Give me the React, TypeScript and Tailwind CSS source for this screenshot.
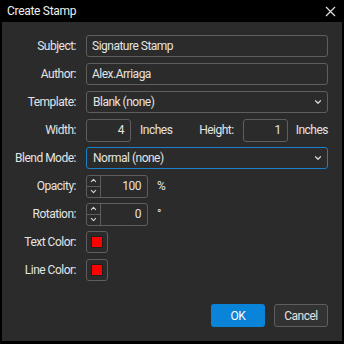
import React from "react";

const Chevron = ({ dir = "down", size = 8 }: { dir?: "up" | "down"; size?: number }) => (
  <svg width={size} height={size} viewBox="0 0 8 8" fill="none">
    <path
      d={dir === "down" ? "M1.5 2.75 L4 5.25 L6.5 2.75" : "M1.5 5.25 L4 2.75 L6.5 5.25"}
      stroke="#d8d8d8"
      strokeWidth="1.2"
      strokeLinecap="round"
      strokeLinejoin="round"
    />
  </svg>
);

const Label = ({ children }: { children: React.ReactNode }) => (
  <div className="w-[74px] shrink-0 text-right">{children}</div>
);

const TextInput = ({ value }: { value: string }) => (
  <div className="flex-1 h-[22px] border border-[#5e5e5e] rounded-[3px] flex items-center px-[5px]">{value}</div>
);

const Select = ({ value, active = false }: { value: string; active?: boolean }) => (
  <div
    className={`flex-1 h-[22px] border rounded-[3px] flex items-center justify-between pl-[6px] pr-[5px] ${
      active ? "border-[#1a80c8]" : "border-[#5e5e5e]"
    }`}
  >
    <span>{value}</span>
    <Chevron />
  </div>
);

const Spin = ({ value, unit }: { value: string; unit: string }) => (
  <div className="flex items-center">
    <div className="w-[62px] h-[23px] shrink-0 border border-[#5e5e5e] rounded-[3px] flex">
      <div className="w-[14px] border-r border-[#5e5e5e] flex flex-col">
        <div className="flex-1 flex items-center justify-center border-b border-[#5e5e5e]">
          <Chevron dir="up" size={7} />
        </div>
        <div className="flex-1 flex items-center justify-center">
          <Chevron dir="down" size={7} />
        </div>
      </div>
      <div className="flex-1 flex items-center justify-end pr-[6px]">{value}</div>
    </div>
    <span className="ml-[9px]">{unit}</span>
  </div>
);

const Swatch = () => (
  <div className="w-[22px] h-[22px] shrink-0 border border-[#5e5e5e] rounded-[3px] flex items-center justify-center">
    <div className="w-[12px] h-[12px] bg-[#ff0000] border border-[#202020]" />
  </div>
);

export default function App() {
  return (
    <div
      className="w-[344px] h-[344px] bg-black flex flex-col text-[#e4e4e4] text-[12px] tracking-[-0.5px]"
      style={{ fontFamily: "Roboto, 'Liberation Sans', sans-serif" }}
    >
      <div className="h-[22px] shrink-0 flex items-center justify-between pl-[7px] pr-[8px]">
        <span className="text-[12px] tracking-[-0.3px] text-[#f0f0f0]">Create Stamp</span>
        <svg width="11" height="11" viewBox="0 0 11 11">
          <path d="M1 1 L10 10 M10 1 L1 10" stroke="#e0e0e0" strokeWidth="1.2" />
        </svg>
      </div>
      <div className="flex-1 mx-[2px] mb-[3px] bg-[#2b2b2b] flex flex-col pt-[13px] pr-[14px] pb-[14px]">
        <div className="flex flex-col gap-[6px]">
          <div className="flex items-center gap-[10px] h-[22px]">
            <Label>Subject:</Label>
            <TextInput value="Signature Stamp" />
          </div>
          <div className="flex items-center gap-[10px] h-[22px]">
            <Label>Author:</Label>
            <TextInput value="Alex.Arriaga" />
          </div>
          <div className="flex items-center gap-[10px] h-[22px]">
            <Label>Template:</Label>
            <Select value="Blank (none)" />
          </div>
          <div className="flex items-center h-[22px]">
            <Label>Width:</Label>
            <div className="ml-[10px] w-[45px] h-[23px] shrink-0 border border-[#5e5e5e] rounded-[3px] flex items-center justify-end pr-[6px]">4</div>
            <span className="ml-[9px]">Inches</span>
            <span className="ml-auto">Height:</span>
            <div className="ml-[9px] w-[45px] h-[23px] shrink-0 border border-[#5e5e5e] rounded-[3px] flex items-center justify-end pr-[6px]">1</div>
            <span className="ml-[8px]">Inches</span>
          </div>
          <div className="flex items-center gap-[10px] h-[22px]">
            <Label>Blend Mode:</Label>
            <Select value="Normal (none)" active />
          </div>
          <div className="flex items-center gap-[10px] h-[22px]">
            <Label>Opacity:</Label>
            <Spin value="100" unit="%" />
          </div>
          <div className="flex items-center gap-[10px] h-[22px]">
            <Label>Rotation:</Label>
            <Spin value="0" unit="°" />
          </div>
          <div className="flex items-center gap-[10px] h-[22px]">
            <Label>Text Color:</Label>
            <Swatch />
          </div>
          <div className="flex items-center gap-[10px] h-[22px]">
            <Label>Line Color:</Label>
            <Swatch />
          </div>
        </div>
        <div className="mt-auto flex justify-end gap-[9px]">
          <div className="w-[54px] h-[23px] rounded-[3px] bg-[#0a84d8] flex items-center justify-center text-white">OK</div>
          <div className="w-[54px] h-[23px] rounded-[3px] border border-[#5e5e5e] bg-[#333333] flex items-center justify-center">Cancel</div>
        </div>
      </div>
    </div>
  );
}
